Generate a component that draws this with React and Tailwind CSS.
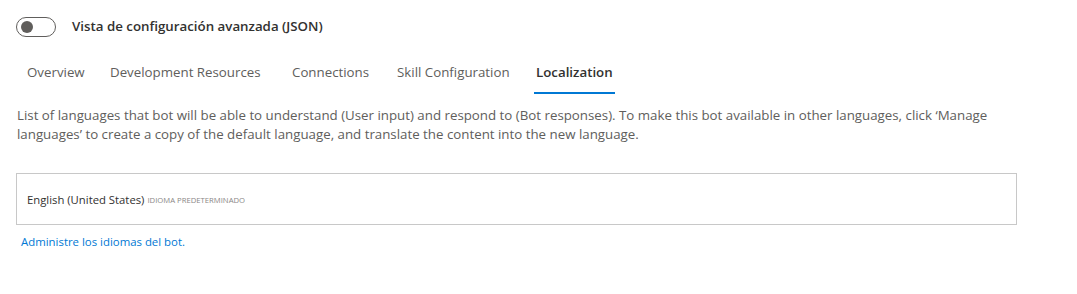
import React, { useState } from "react";

const tabs = [
  { label: "Overview", cls: "w-[83px]" },
  { label: "Development Resources", cls: "w-[182px]" },
  { label: "Connections", cls: "w-[105px]" },
  { label: "Skill Configuration", cls: "w-[139px]" },
  { label: "Localization", cls: "" },
];

const App = () => {
  const [advanced, setAdvanced] = useState(false);
  const [active, setActive] = useState("Localization");

  return (
    <div className="w-[1077px] h-[294px] bg-white text-[#323130] font-['Segoe_UI','Open_Sans',sans-serif]">
      {/* toggle */}
      <div className="flex items-center pt-[17px] pl-[16px]">
        <button
          type="button"
          onClick={() => setAdvanced(!advanced)}
          className="w-[40px] h-[20px] rounded-full border border-[#605e5c] flex items-center px-[4px]"
        >
          <span className="w-[12px] h-[12px] rounded-full bg-[#605e5c]" />
        </button>
        <span className="ml-[16px] text-[13.3px] font-semibold">Vista de configuración avanzada (JSON)</span>
      </div>

      {/* tabs */}
      <div className="flex mt-[15px] h-[42px] pl-[27px]">
        {tabs.map(t => (
          <div key={t.label} className={`${t.cls} h-full flex`}>
            <button
              type="button"
              onClick={() => setActive(t.label)}
              className={`relative h-full text-[13.3px] text-left ${active === t.label ? "font-semibold text-[#323130]" : "text-[#605e5c]"}`}
            >
              {t.label}
              {active === t.label && (
                <span className="absolute left-[-2px] right-[-2px] bottom-0 h-[2px] bg-[#0078d4]" />
              )}
            </button>
          </div>
        ))}
      </div>

      {/* description */}
      <p className="ml-[17px] mt-[12px] w-[1000px] text-[13.3px] leading-[19px] text-[#605e5c]">
        List of languages that bot will be able to understand (User input) and respond to (Bot responses). To make this bot available in other languages, click ‘Manage languages’ to create a copy of the default language, and translate the content into the new language.
      </p>

      {/* languages box */}
      <div className="ml-[16px] mt-[29px] w-[1001px] h-[52px] border border-[#c8c8c8] flex items-center pl-[10px] pt-[3px]">
        <span className="text-[11.3px] text-[#323130]">English (United States)</span>
        <span className="ml-[3px] text-[7.7px] uppercase text-[#8a8886]">Idioma predeterminado</span>
      </div>

      <a href="#" className="block ml-[21px] mt-[8px] text-[11.4px] text-[#0078d4]">
        Administre los idiomas del bot.
      </a>
    </div>
  );
};

export default App;
